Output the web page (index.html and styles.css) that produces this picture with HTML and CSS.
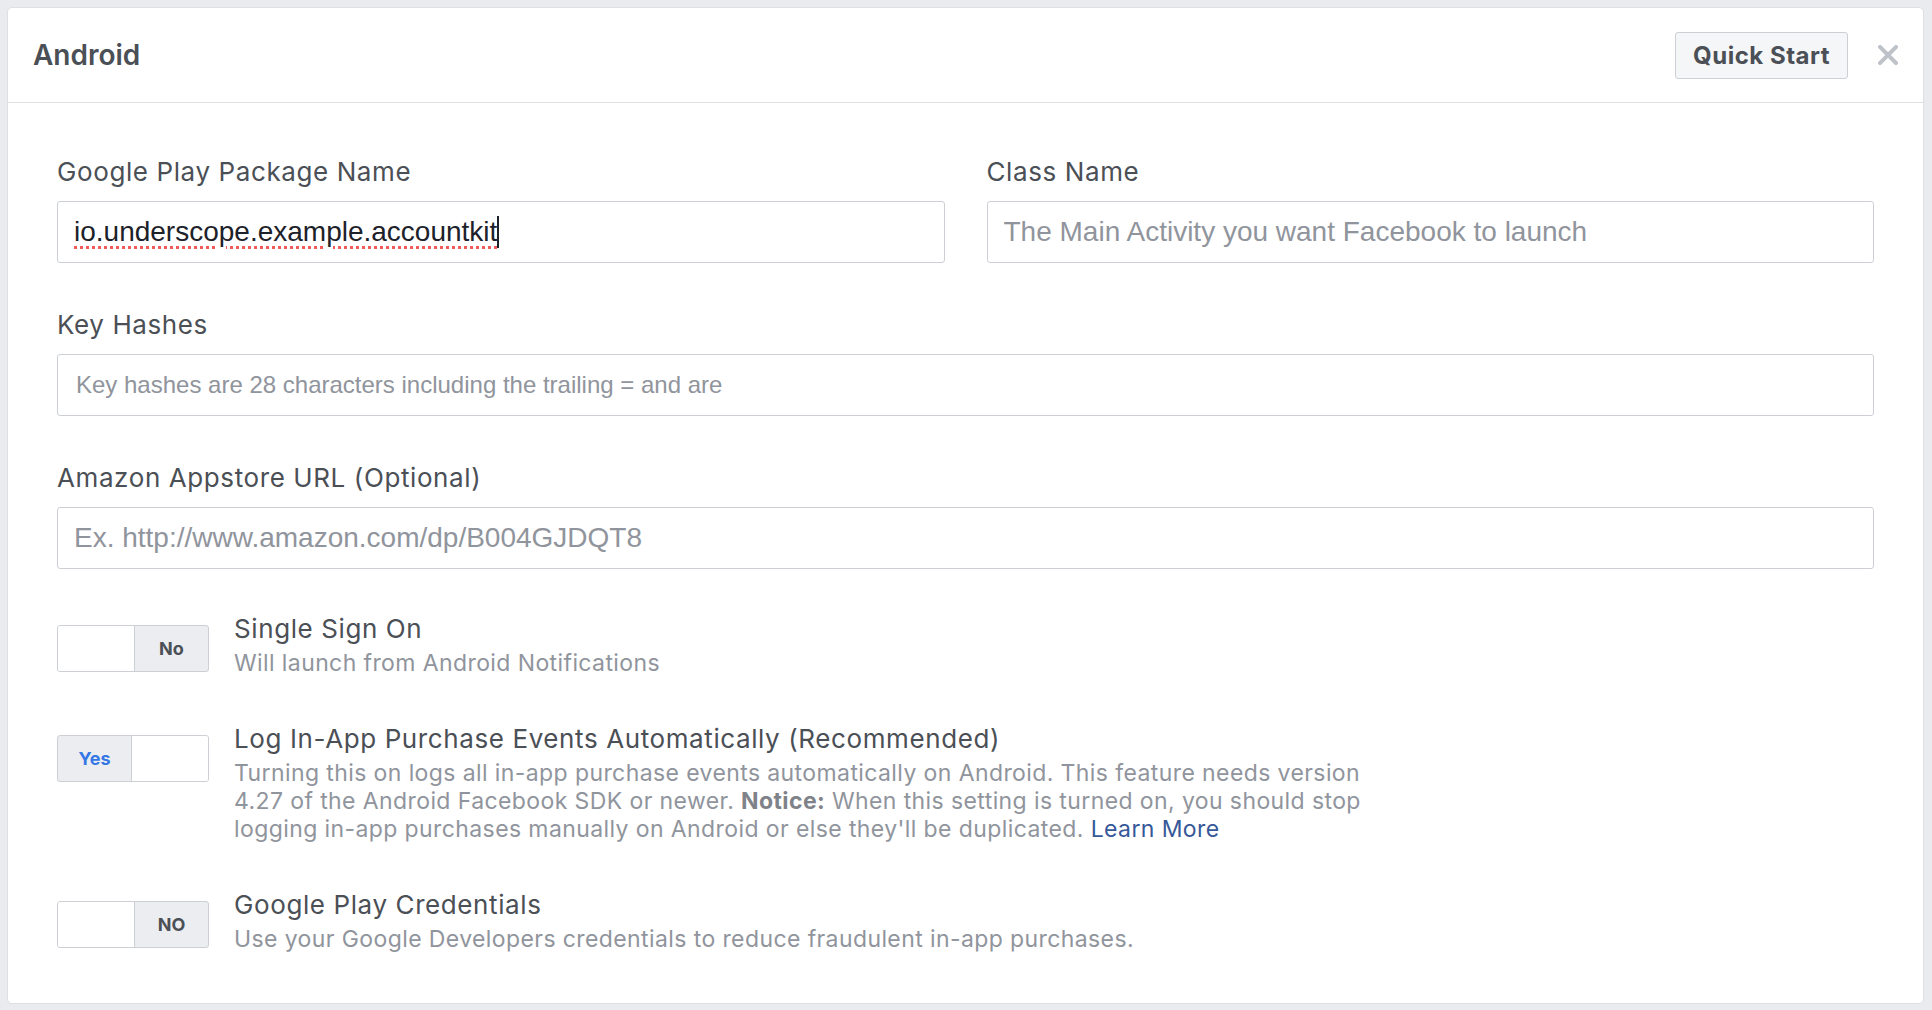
FILE: index.html
```html
<!DOCTYPE html>
<html lang="en">
<head>
  <meta charset="UTF-8" />
  <title>Android Settings</title>
  <link rel="stylesheet" href="styles.css">
</head>
<body>

  <div class="card">
    <div class="card-header">
      <h2>Android</h2>
      <div class="header-actions">
        <button class="btn">Quick Start</button>
        <span class="close">
          <svg width="20" height="20" viewBox="0 0 20 20"><path d="M2 2 L18 18 M18 2 L2 18" stroke="#bec3c9" stroke-width="4" stroke-linecap="square"/></svg>
        </span>
      </div>
    </div>

    <div class="card-body">
      <div class="fields">
        <div class="field-row">
          <div class="field">
            <label>Google Play Package Name</label>
            <div class="input filled"><span class="misspelled">io.underscope.example.accountkit</span><span class="caret"></span></div>
          </div>
          <div class="field">
            <label>Class Name</label>
            <input class="input" type="text" placeholder="The Main Activity you want Facebook to launch">
          </div>
        </div>

        <div class="field">
          <label>Key Hashes</label>
          <input class="input small" type="text" placeholder="Key hashes are 28 characters including the trailing = and are">
        </div>

        <div class="field">
          <label>Amazon Appstore URL (Optional)</label>
          <input class="input" type="text" placeholder="Ex. http://www.amazon.com/dp/B004GJDQT8">
        </div>
      </div>

      <!-- toggles -->
      <div class="options">
        <div class="option">
          <div class="toggle off">
            <span class="knob"></span>
            <span class="toggle-label">No</span>
          </div>
          <div class="option-text">
            <div class="option-title">Single Sign On</div>
            <div class="option-desc">Will launch from Android Notifications</div>
          </div>
        </div>

        <div class="option">
          <div class="toggle on">
            <span class="toggle-label">Yes</span>
            <span class="knob"></span>
          </div>
          <div class="option-text">
            <div class="option-title">Log In-App Purchase Events Automatically (Recommended)</div>
            <div class="option-desc wide">Turning this on logs all in-app purchase events automatically on Android. This feature needs version 4.27 of the Android Facebook SDK or newer. <b>Notice:</b> When this setting is turned on, you should stop logging in-app purchases manually on Android or else they'll be duplicated. <a href="#">Learn More</a></div>
          </div>
        </div>

        <div class="option">
          <div class="toggle off">
            <span class="knob"></span>
            <span class="toggle-label">NO</span>
          </div>
          <div class="option-text">
            <div class="option-title">Google Play Credentials</div>
            <div class="option-desc">Use your Google Developers credentials to reduce fraudulent in-app purchases.</div>
          </div>
        </div>
      </div>
    </div>
  </div>

</body>
</html>
```

FILE: styles.css
```css
* {
  box-sizing: border-box;
}
body {
  margin: 0;
  padding: 7px 8px 7px 7px;
  background-color: #e9ebee;
  font-family: Inter, "Noto Sans", sans-serif;
  color: #4b4f56;
}

.card {
  background: #fff;
  border: 1px solid #dddfe2;
  border-radius: 5px;
  min-height: 996px;
}

.card-header {
  display: flex;
  align-items: center;
  justify-content: space-between;
  height: 95px;
  padding: 0 25px 0 25px;
  border-bottom: 1px solid #dddfe2;
}

.card-header h2 {
  margin: 0;
  font-size: 28px;
  font-weight: 600;
  color: #4b4f56;
}

.header-actions {
  display: flex;
  align-items: center;
  gap: 30px;
}

.btn {
  height: 47px;
  padding: 0 17px;
  background: #f5f6f7;
  border: 1px solid #ccd0d5;
  border-radius: 3px;
  font-family: Inter, sans-serif;
  font-size: 24px;
  font-weight: 700;
  letter-spacing: 0.5px;
  color: #4b4f56;
}

.close {
  display: flex;
  width: 20px;
  height: 20px;
}

.card-body {
  padding: 54px 49px 50px 49px;
}

.fields {
  display: flex;
  flex-direction: column;
  gap: 47px;
  margin-bottom: 44px;
}

.field-row {
  display: grid;
  grid-template-columns: 1fr 1fr;
  gap: 42px;
}

.field label {
  display: block;
  font-size: 26px;
  letter-spacing: 0.6px;
  line-height: 30px;
  margin-bottom: 14px;
  color: #4b4f56;
}

.input {
  display: block;
  width: 100%;
  height: 62px;
  padding: 0 16px;
  border: 1px solid #ccd0d5;
  border-radius: 3px;
  font-family: "Liberation Sans", Arial, sans-serif;
  font-size: 28px;
  color: #1d2129;
  outline: none;
}

.input::placeholder {
  color: #90949c;
}

.input.small {
  font-size: 24px;
  padding-left: 18px;
}

.input.filled {
  display: flex;
  align-items: center;
}

.misspelled {
  text-decoration: underline dotted #f25c58;
  text-decoration-thickness: 3px;
  text-underline-offset: 5px;
}

.caret {
  display: inline-block;
  width: 2px;
  height: 32px;
  background: #1d2129;
}

/* toggle rows */
.options {
  display: flex;
  flex-direction: column;
  gap: 46px;
}

.option {
  display: flex;
  align-items: flex-start;
  gap: 25px;
}

.toggle {
  display: flex;
  flex: none;
  width: 152px;
  height: 47px;
  margin-top: 12px;
  border: 1px solid #ccd0d5;
  border-radius: 3px;
  background: #ebedf0;
  overflow: hidden;
}

.knob {
  width: 77px;
  background: #fff;
}

.toggle.off .knob {
  border-right: 1px solid #ccd0d5;
}

.toggle.on .knob {
  border-left: 1px solid #ccd0d5;
}

.toggle-label {
  flex: 1;
  display: flex;
  align-items: center;
  justify-content: center;
  font-size: 18px;
  font-weight: 700;
  color: #4b4f56;
}

.toggle.on .toggle-label {
  color: #3578e5;
}

.option-title {
  font-size: 26px;
  letter-spacing: 0.6px;
  line-height: 32px;
  margin-bottom: 4px;
  color: #4b4f56;
}

.option-desc {
  font-size: 23px;
  line-height: 28px;
  color: #90949c;
  letter-spacing: 0.4px;
}

.option-desc.wide {
  max-width: 1145px;
}

.option-desc b {
  color: #7f8389;
  font-weight: 700;
}

.option-desc a {
  color: #365899;
  text-decoration: none;
}
```
